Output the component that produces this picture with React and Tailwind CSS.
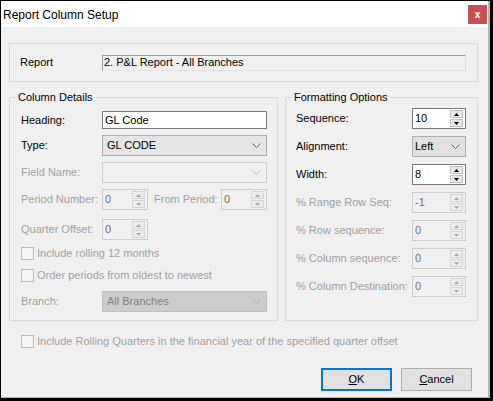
import React from 'react';

function Chevron({ color }) {
    return (
        <svg width="9" height="5" viewBox="0 0 9 5" className="shrink-0">
            <polyline points="0.5,0.5 4.5,4.5 8.5,0.5" fill="none" stroke={color} strokeWidth="1" />
        </svg>
    );
}

function SpinBtn({ up, enabled }) {
    return (
        <div className={`w-[13px] h-[8px] flex items-center justify-center border ${enabled ? 'bg-[#e6e6e6] border-[#c4c4c4]' : 'bg-[#ececec] border-[#d4d4d4]'}`}>
            <svg width="5" height="3" viewBox="0 0 5 3">
                <polygon points={up ? '0,3 2.5,0 5,3' : '0,0 5,0 2.5,3'} fill={enabled ? '#000000' : '#a8a8a8'} />
            </svg>
        </div>
    );
}

function SpinBox({ value, enabled, wide }) {
    return (
        <div className={`${wide ? 'w-[54px]' : 'w-[46px]'} h-[21px] flex items-center border pl-[2px] pr-[2px] ${enabled ? 'border-[#7a7a7a] bg-white text-black' : 'border-[#cccccc] bg-[#f0f0f0] text-[#6d6d6d]'}`}>
            <span className="flex-1 leading-none">{value}</span>
            <div className="flex flex-col gap-px">
                <SpinBtn up enabled={enabled} />
                <SpinBtn enabled={enabled} />
            </div>
        </div>
    );
}

function CheckRow({ label, className = '' }) {
    return (
        <div className={`flex items-center gap-[3px] h-[13px] text-[#a0a0a0] ${className}`}>
            <span className="w-[13px] h-[13px] border border-[#bcbcbc] bg-[#f4f4f4]" />
            <span>{label}</span>
        </div>
    );
}

function Row({ label, enabled, children, className = '' }) {
    return (
        <div className={`flex items-center ${className}`}>
            <span className={`w-[81px] ${enabled ? 'text-black' : 'text-[#a0a0a0]'}`}>{label}</span>
            {children}
        </div>
    );
}

function FmtRow({ label, value, enabled }) {
    return (
        <div className="flex items-center h-[21px]">
            <span className={`w-[116px] ${enabled ? 'text-black' : 'text-[#a0a0a0]'}`}>{label}</span>
            <SpinBox value={value} enabled={enabled} wide />
        </div>
    );
}

export default function App() {
    return (
        <div className="w-[493px] h-[401px] bg-black pt-px pl-px font-['Liberation_Sans',Arial,sans-serif] text-[11px] text-black">
            <div className="w-[489px] h-[397px] flex flex-col bg-[#f0f0f0] border-r-2 border-b border-[#b4b4b4]">
                {/* title bar */}
                <div className="h-[26px] bg-white flex items-center justify-between pl-[2px] pr-px">
                    <span className="text-[12px] pt-[2px]">Report Column Setup</span>
                    <button className="w-[19px] h-[19px] mt-px bg-[#c75050] text-white text-[10px] font-bold flex items-center justify-center leading-none">x</button>
                </div>

                <div className="flex-1 flex flex-col pt-4 pl-2 pr-[10px]">
                    {/* report */}
                    <div className="h-[39px] border border-[#dcdcdc] flex items-center pl-[10px] pr-[11px]">
                        <span className="w-[82px]">Report</span>
                        <div className="flex-1 h-[16px] flex items-center pl-px border-t border-l border-[#a0a0a0] border-b border-r border-b-[#e3e3e3] border-r-[#e3e3e3]">
                            2. P&amp;L Report - All Branches
                        </div>
                    </div>

                    {/* groups */}
                    <div className="flex gap-[7px] mt-2">
                        <fieldset className="w-[269px] h-[231px] border border-[#dcdcdc] pl-[11px] pr-[10px]">
                            <legend className="ml-[-5px] px-[2px] leading-[14px]">Column Details</legend>
                            <div className="flex flex-col pt-[7px]">
                                <Row label="Heading:" enabled>
                                    <div className="w-[165px] h-[18px] border border-[#7a7a7a] bg-white flex items-center pl-[2px]">GL Code</div>
                                </Row>
                                <Row label="Type:" enabled className="mt-[6px]">
                                    <div className="w-[165px] h-[21px] border border-[#adadad] bg-[#e5e5e5] flex items-center justify-between pl-[4px] pr-[5px]">
                                        <span>GL CODE</span>
                                        <Chevron color="#606060" />
                                    </div>
                                </Row>
                                <Row label="Field Name:" className="mt-[6px]">
                                    <div className="w-[165px] h-[21px] border border-[#cccccc] bg-[#f0f0f0] flex items-center justify-end pr-[5px]">
                                        <Chevron color="#c0c0c0" />
                                    </div>
                                </Row>
                                <Row label="Period Number:" className="mt-[6px]">
                                    <SpinBox value="0" />
                                    <span className="ml-[6px] w-[67px] text-[#a0a0a0]">From Period:</span>
                                    <SpinBox value="0" />
                                </Row>
                                <Row label="Quarter Offset:" className="mt-[9px]">
                                    <SpinBox value="0" />
                                </Row>
                                <CheckRow label="Include rolling 12 months" className="mt-[7px]" />
                                <CheckRow label="Order periods from oldest to newest" className="mt-[9px]" />
                                <Row label="Branch:" className="mt-[9px]">
                                    <div className="w-[165px] h-[21px] border border-[#bfbfbf] bg-[#cccccc] text-[#838383] flex items-center justify-between pl-[4px] pr-[5px]">
                                        <span>All Branches</span>
                                        <Chevron color="#b0b0b0" />
                                    </div>
                                </Row>
                            </div>
                        </fieldset>

                        <fieldset className="w-[193px] h-[231px] border border-[#dcdcdc] pl-[10px] pr-[11px]">
                            <legend className="ml-[-4px] px-[2px] leading-[14px]">Formatting Options</legend>
                            <div className="flex flex-col gap-[7px] pt-[4px]">
                                <FmtRow label="Sequence:" value="10" enabled />
                                <div className="flex items-center h-[21px]">
                                    <span className="w-[116px]">Alignment:</span>
                                    <div className="w-[54px] h-[21px] border border-[#adadad] bg-[#e1e1e1] flex items-center justify-between pl-[2px] pr-[5px]">
                                        <span>Left</span>
                                        <Chevron color="#606060" />
                                    </div>
                                </div>
                                <FmtRow label="Width:" value="8" enabled />
                                <FmtRow label="% Range Row Seq:" value="-1" />
                                <FmtRow label="% Row sequence:" value="0" />
                                <FmtRow label="% Column sequence:" value="0" />
                                <FmtRow label="% Column Destination:" value="0" />
                            </div>
                        </fieldset>
                    </div>

                    <CheckRow label="Include Rolling Quarters in the financial year of the specified quarter offset" className="mt-[14px] ml-[12px]" />

                    <div className="flex justify-end gap-[9px] mt-[20px] pr-[6px]">
                        <button className="w-[71px] h-[23px] border-2 border-[#0078d7] bg-[#e1e1e1]">
                            <u className="underline-offset-1">O</u>K
                        </button>
                        <button className="w-[71px] h-[23px] border border-[#adadad] bg-[#e1e1e1]">
                            <u className="underline-offset-1">C</u>ancel
                        </button>
                    </div>
                </div>
            </div>
        </div>
    );
}
